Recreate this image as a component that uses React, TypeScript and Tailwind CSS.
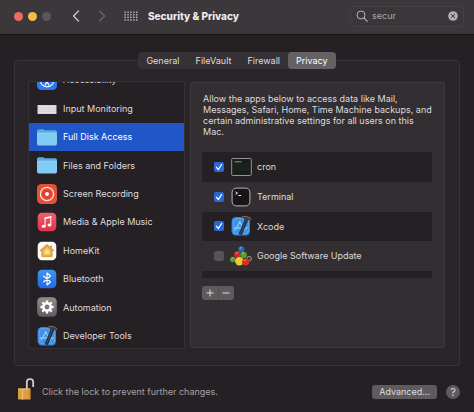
import { useState } from "react";
import type { ReactNode } from "react";

const tabs = ["General", "FileVault", "Firewall", "Privacy"];

function AccessibilityIcon() {
  return (
    <svg viewBox="0 0 20 20" className="size-5">
      <rect width="20" height="20" rx="4.5" fill="#2f78ee" />
      <circle cx="10" cy="10" r="6.8" fill="none" stroke="#e8f1ff" strokeWidth="1.2" />
      <circle cx="10" cy="6.4" r="1.2" fill="#fff" />
      <path d="M6 8.4l4 .8 4-.8M10 9v2.5L8.2 15M10 11.5l1.8 3.5" fill="none" stroke="#fff" strokeWidth="1.2" strokeLinecap="round" />
    </svg>
  );
}

function KeyboardIcon() {
  return (
    <svg viewBox="0 0 20 20" className="size-5">
      <rect x=".5" y="6" width="19" height="9" fill="#d6d3d6" />
      <path d="M1.5 7.5h17M1.5 9.5h17M1.5 11.5h17M1.5 13.5h17" stroke="#e9e7e9" strokeWidth="1" strokeDasharray="1.3 .4" />
    </svg>
  );
}

function FolderIcon() {
  return (
    <svg viewBox="0 0 20 20" className="size-5">
      <path d="M0 4a1.8 1.8 0 0 1 1.8-1.8h4.4c.8 0 1.2 1.1 2.1 1.1h9.9A1.8 1.8 0 0 1 20 5.1v4H0z" fill="#58aeda" />
      <path d="M0 6.7a1 1 0 0 1 1-1h18a1 1 0 0 1 1 1v10a1.8 1.8 0 0 1-1.8 1.8H1.8A1.8 1.8 0 0 1 0 16.7z" fill="#82cbf3" />
      <path d="M.6 6.2h18.8" stroke="#9bdafa" strokeWidth=".6" />
    </svg>
  );
}

function RecordingIcon() {
  return (
    <svg viewBox="0 0 20 20" className="size-5">
      <rect width="20" height="20" rx="4.5" fill="#e5503e" />
      <circle cx="10" cy="10" r="6.6" fill="none" stroke="#ffe3bd" strokeWidth="1.3" />
      <circle cx="10" cy="10" r="4.3" fill="#e33b33" />
      <circle cx="10" cy="10" r="2" fill="#fff" />
    </svg>
  );
}

function MusicIcon() {
  return (
    <svg viewBox="0 0 20 20" className="size-5">
      <defs>
        <linearGradient id="music" x2="0" y2="1">
          <stop stopColor="#f2606d" />
          <stop offset="1" stopColor="#dd3549" />
        </linearGradient>
      </defs>
      <rect x=".7" y=".7" width="18.6" height="18.6" rx="4.2" fill="url(#music)" />
      <path d="M7.6 5.4l6.7-1.5v1.8L7.6 7.2z" fill="#fff" />
      <path d="M8.1 14V5.6M13.8 12.6V4.2" stroke="#fff" strokeWidth="1" />
      <ellipse cx="6.7" cy="14.3" rx="1.9" ry="1.5" fill="#fff" />
      <ellipse cx="12.4" cy="13" rx="1.9" ry="1.5" fill="#fff" />
    </svg>
  );
}

function HomeIcon() {
  return (
    <svg viewBox="0 0 20 20" className="size-5">
      <rect x=".7" y=".7" width="18.6" height="18.6" rx="4.2" fill="#fbfafa" />
      <path d="M10 3L3 9v1.2h1.4V16h11.2v-5.8H17V9l-2-1.7V4.5h-1.8v1.2z" fill="#dda044" />
      <path d="M10 5.5l-4 3.5v5.5h8V9z" fill="#f0bd55" />
      <path d="M10 8l-2.2 2v3h4.4v-3z" fill="#fbe29a" />
    </svg>
  );
}

function BluetoothIcon() {
  return (
    <svg viewBox="0 0 20 20" className="size-5">
      <defs>
        <linearGradient id="bluetooth" x2="0" y2="1">
          <stop stopColor="#3f94f5" />
          <stop offset="1" stopColor="#2369e0" />
        </linearGradient>
      </defs>
      <rect x=".7" y=".7" width="18.6" height="18.6" rx="4.2" fill="url(#bluetooth)" />
      <path d="M6.5 7l7 6-3.500 3V4l3.500 3-7 6" fill="none" stroke="#fff" strokeWidth="1.1" strokeLinejoin="round" strokeLinecap="round" />
    </svg>
  );
}

function GearIcon() {
  return (
    <svg viewBox="0 0 20 20" className="size-5">
      <defs>
        <linearGradient id="gear" x2="0" y2="1">
          <stop stopColor="#908e90" />
          <stop offset="1" stopColor="#5e5c5e" />
        </linearGradient>
      </defs>
      <rect x=".2" y=".2" width="19.6" height="19.6" rx="4.5" fill="url(#gear)" />
      <circle cx="10" cy="10" r="3.7" fill="none" stroke="#fff" strokeWidth="2.6" />
      <path
        d="M10 3.4v2.3M10 14.3v2.3M3.4 10h2.3M14.3 10h2.3M5.33 5.33l1.63 1.63M13.04 13.04l1.63 1.63M14.67 5.33l-1.63 1.63M6.96 13.04l-1.63 1.63"
        stroke="#fff"
        strokeWidth="2.3"
      />
    </svg>
  );
}

function XcodeIcon() {
  return (
    <svg viewBox="0 0 20 20" className="size-5 overflow-visible">
      <rect x=".6" y="1" width="18.4" height="18.4" rx="4.2" fill="#3481dc" />
      <rect x="2.2" y="2.6" width="15.2" height="15.2" rx="3" fill="#3f92e8" stroke="#7cbaf3" strokeWidth=".6" />
      <path d="M9 5.5L4.2 14M8.5 5.5l5 8.5M3.5 12H16" stroke="#8ec6f5" strokeWidth="1.3" strokeLinecap="round" />
      <path d="M15.6 3.5L9.2 18.6" stroke="#193049" strokeWidth="3.4" />
      <path d="M15.3 4L9.5 17.8" stroke="#46505b" strokeWidth="1" />
      <path d="M10.5.8c3-1.3 6.3-.6 8.2.8l2.2 2-1 1.2-2.2-1-1.6 1.1-2.9-1.3c0-1.200-1-1.600-2.700-1.600z" fill="#3f3b3e" />
      <path d="M11 .9c3-1 5.6-.5 7.7.9l1.6 1.5" stroke="#98918c" strokeWidth=".6" fill="none" />
    </svg>
  );
}

function CronIcon() {
  return (
    <svg viewBox="0 0 21 20" className="h-5 w-[21px]">
      <rect x=".7" y="1.5" width="19.6" height="17" rx="1" fill="#181d1a" stroke="#969396" strokeWidth="1" />
      <path d="M3.5 4.7h7" stroke="#39a850" strokeWidth="1.3" />
      <path d="M2.5 7h16M2.5 9h16M2.5 11h16M2.5 13h16" stroke="#252c27" strokeWidth=".6" />
    </svg>
  );
}

function TerminalIcon() {
  return (
    <svg viewBox="0 0 20 20" className="size-5">
      <rect x="1.1" y="1.1" width="17.8" height="17.8" rx="4.2" fill="#171518" stroke="#bdbabd" strokeWidth="1" />
      <path d="M4.5 4.8l2 1.3-2 1.3M7.5 8.5h2.6" stroke="#eee" strokeWidth="1" fill="none" />
    </svg>
  );
}

function UpdateIcon() {
  return (
    <svg viewBox="0 0 22 20" className="h-5 w-[22px]">
      <circle cx="19.2" cy="12.6" r="2.3" fill="#354536" stroke="#a9b39c" strokeWidth=".8" />
      <circle cx="11.3" cy="3.3" r="3.1" fill="#2d66b5" />
      <circle cx="7.3" cy="8.5" r="3.2" fill="#d32b22" />
      <circle cx="13.6" cy="9" r="3.3" fill="#5d9a35" />
      <circle cx="2.8" cy="13.5" r="2.7" fill="#5a9b38" />
      <circle cx="9.3" cy="15.2" r="4.2" fill="#efc82d" />
      <circle cx="15.7" cy="16" r="3.6" fill="#dc2b21" />
      <path
        d="M10.2 2.1l1-.3M6.3 7l1-.3M12.6 7.4l1-.3M2 12.4l.8-.3M7.8 13.2l1.4-.4M14.5 14.5l1-.3"
        stroke="#fff"
        strokeOpacity=".55"
        strokeWidth="1"
        strokeLinecap="round"
      />
    </svg>
  );
}

const categories: { name: string; icon: ReactNode }[] = [
  { name: "Accessibility", icon: <AccessibilityIcon /> },
  { name: "Input Monitoring", icon: <KeyboardIcon /> },
  { name: "Full Disk Access", icon: <FolderIcon /> },
  { name: "Files and Folders", icon: <FolderIcon /> },
  { name: "Screen Recording", icon: <RecordingIcon /> },
  { name: "Media & Apple Music", icon: <MusicIcon /> },
  { name: "HomeKit", icon: <HomeIcon /> },
  { name: "Bluetooth", icon: <BluetoothIcon /> },
  { name: "Automation", icon: <GearIcon /> },
  { name: "Developer Tools", icon: <XcodeIcon /> },
];

const apps: { name: string; icon: ReactNode; allowed: boolean }[] = [
  { name: "cron", icon: <CronIcon />, allowed: true },
  { name: "Terminal", icon: <TerminalIcon />, allowed: true },
  { name: "Xcode", icon: <XcodeIcon />, allowed: true },
  { name: "Google Software Update", icon: <UpdateIcon />, allowed: false },
];

function TitleBar() {
  return (
    <header className="flex h-[35px] items-center border-b border-[#151214] bg-[#3b373a] pr-[10px] pb-[2px] pl-[14px]">
      <div className="flex gap-[5px]">
        <button aria-label="Close" className="size-[9px] rounded-full bg-[#ec6a5f]" />
        <button aria-label="Minimize" className="size-[9px] rounded-full bg-[#f4be4b]" />
        <button aria-label="Zoom" className="size-[9px] rounded-full bg-[#5b565a]" />
      </div>
      <button aria-label="Back" className="ml-[21px]">
        <svg viewBox="0 0 8 12" className="h-3 w-2">
          <path d="M6.5 1l-5 5 5 5" fill="none" stroke="#d3d0d2" strokeWidth="1.2" strokeLinecap="round" strokeLinejoin="round" />
        </svg>
      </button>
      <button aria-label="Forward" className="ml-[18px]">
        <svg viewBox="0 0 8 12" className="h-3 w-2">
          <path d="M1.5 1l5 5-5 5" fill="none" stroke="#6d696c" strokeWidth="1.2" strokeLinecap="round" strokeLinejoin="round" />
        </svg>
      </button>
      <button aria-label="Show all" className="ml-[18px]">
        <svg viewBox="0 0 14 10" className="h-[10px] w-[14px]">
          {[1.2, 3.8, 6.4, 9].map((y) =>
            [1.2, 4.1, 7, 9.9, 12.8].map((x) => (
              <rect key={`${x}-${y}`} x={x - 0.8} y={y - 0.8} width="1.5" height="1.5" rx=".4" fill="#c3bfc2" />
            ))
          )}
        </svg>
      </button>
      <h1 className="ml-[10px] text-[10px] font-extrabold text-[#edebed]">Security &amp; Privacy</h1>
      <label className="ml-auto flex h-[21px] w-[114px] items-center rounded-[4px] border border-[#444043] bg-[#3a3639] px-[5px]">
        <svg viewBox="0 0 12 12" className="size-3">
          <circle cx="5" cy="5" r="4" fill="none" stroke="#b5b1b4" strokeWidth="1" />
          <path d="M8 8l3.3 3.3" stroke="#b5b1b4" strokeWidth="1.1" strokeLinecap="round" />
        </svg>
        <input aria-label="Search" defaultValue="secur" className="ml-[4px] w-0 flex-1 bg-transparent text-[9px] text-[#aaa6a9] outline-none" />
        <button aria-label="Clear search">
          <svg viewBox="0 0 10 10" className="size-[10px]">
            <circle cx="5" cy="5" r="4.8" fill="#b2aeb1" />
            <path d="M3.3 3.3l3.4 3.4M6.7 3.3L3.3 6.7" stroke="#3a3639" strokeWidth="1" strokeLinecap="round" />
          </svg>
        </button>
      </label>
    </header>
  );
}

function AppRow({ name, icon, allowed }: { name: string; icon: ReactNode; allowed: boolean }) {
  return (
    <li className="even:bg-[#322e31]">
      <label className="flex h-full items-center pl-3">
        <span className="grid size-[10px]">
          <input
            type="checkbox"
            defaultChecked={allowed}
            className="peer col-start-1 row-start-1 size-[10px] appearance-none rounded-[2px] bg-[#575356] checked:bg-[#2c67d8]"
          />
          <svg viewBox="0 0 10 10" className="pointer-events-none invisible col-start-1 row-start-1 size-[10px] peer-checked:visible">
            <path d="M2.5 5.3l1.9 2.2 3.2-5" fill="none" stroke="#fff" strokeWidth="1.3" strokeLinecap="round" strokeLinejoin="round" />
          </svg>
        </span>
        <span className="ml-[6px] flex w-[22px] justify-center">{icon}</span>
        <span className="ml-[5px]">{name}</span>
      </label>
    </li>
  );
}

export default function App() {
  const [tab, setTab] = useState("Privacy");
  const [selected, setSelected] = useState("Full Disk Access");

  return (
    <div className="flex min-h-screen flex-col bg-[#252024] font-['Inter','Liberation_Sans',sans-serif] text-[9px] text-[#dfdcde]">
      <TitleBar />
      <main className="flex flex-col px-[14px] pt-[17px]">
        <div role="tablist" className="z-10 -mb-[9px] flex h-[17px] self-center rounded-[4px] bg-[#353134]">
          {tabs.map((name) => (
            <button
              key={name}
              role="tab"
              aria-selected={tab === name}
              onClick={() => setTab(name)}
              className="rounded-[4px] px-2 aria-selected:bg-[#656164] aria-selected:text-white"
            >
              {name}
            </button>
          ))}
        </div>
        <section className="flex gap-[6px] rounded-[3px] border border-[#373336] bg-[#2a2529] px-[14px] pt-[21px] pb-[17px]">
          <div className="flex h-[266px] w-[155px] flex-col justify-end overflow-hidden bg-[#252024] ring-1 ring-[#353134]">
            <ul className="-mb-[2px] grid h-[284px] shrink-0 grid-rows-10">
              {categories.map(({ name, icon }) => (
                <li key={name}>
                  <button
                    aria-pressed={selected === name}
                    onClick={() => setSelected(name)}
                    className="flex h-full w-full items-center gap-[6px] pl-2 aria-pressed:bg-[#2156c9] aria-pressed:text-white"
                  >
                    {icon}
                    {name}
                  </button>
                </li>
              ))}
            </ul>
          </div>
          <div className="flex-1 rounded-[2px] border border-[#3b373a] bg-[#322e31] pt-[10px] pr-3 pl-[11px]">
            <p className="pl-px leading-[11px]">
              Allow the apps below to access data like Mail, Messages, Safari, Home, Time Machine backups, and certain
              administrative settings for all users on this Mac.
            </p>
            <div className="mt-[15px] bg-[#252024] pb-[7px]">
              <ul className="grid h-[119px] grid-rows-4">
                {apps.map((app) => (
                  <AppRow key={app.name} {...app} />
                ))}
              </ul>
            </div>
            <div className="mt-2 flex h-[14px] w-8 rounded-[3px] bg-[#5e5a5d]">
              <button aria-label="Add app" className="flex flex-1 items-center justify-center border-r border-[#524e51]">
                <svg viewBox="0 0 8 8" className="size-2">
                  <path d="M4 .5v7M.5 4h7" stroke="#dfdcde" strokeWidth="1" />
                </svg>
              </button>
              <button aria-label="Remove app" className="flex flex-1 items-center justify-center">
                <svg viewBox="0 0 8 8" className="size-2">
                  <path d="M.5 4h7" stroke="#dfdcde" strokeWidth="1" />
                </svg>
              </button>
            </div>
          </div>
        </section>
      </main>
      <footer className="flex items-center pt-3 pr-[14px] pl-[18px]">
        <button aria-label="Unlock">
          <svg viewBox="0 0 17 22" className="h-[22px] w-[17px]">
            <path d="M8.8 11V4.2a3.2 3.2 0 0 1 6.4 0V9" fill="none" stroke="#d9d6d8" strokeWidth="1.7" />
            <rect y="10.5" width="12.5" height="11" rx=".6" fill="#dc9c43" />
            <path d="M.3 11h11.9" stroke="#f2c477" strokeWidth="1" />
            <path d="M4.5 11v10.5" stroke="#f1bd68" strokeWidth="1.5" />
            <path d="M12 11v10.5" stroke="#a96c28" strokeWidth=".8" />
          </svg>
        </button>
        <p className="mt-[6px] ml-[7px] text-[#a5a1a4]">Click the lock to prevent further changes.</p>
        <button className="mt-[6px] ml-auto h-[14px] rounded-[3px] bg-[#5e5a5d] px-[7px] leading-[14px]">Advanced...</button>
        <button aria-label="Help" className="mt-[6px] ml-[9px] size-[14px] rounded-full bg-[#5e5a5d] text-[11px] leading-[14px]">
          ?
        </button>
      </footer>
    </div>
  );
}
